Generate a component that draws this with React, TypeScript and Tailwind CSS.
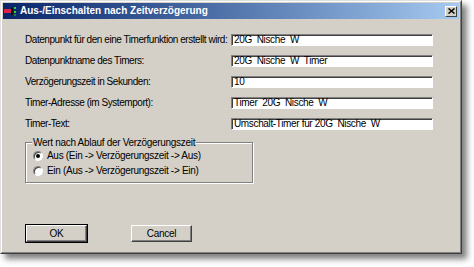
import React from "react";

const fields = [
  { label: "Datenpunkt für den eine Timerfunktion erstellt wird:", value: "20G  Nische  W" },
  { label: "Datenpunktname des Timers:", value: "20G  Nische  W  Timer" },
  { label: "Verzögerungszeit in Sekunden:", value: "10" },
  { label: "Timer-Adresse (im Systemport):", value: "Timer  20G  Nische  W" },
  { label: "Timer-Text:", value: "Umschalt-Timer für 20G  Nische  W" },
];

const font = { fontFamily: '"Liberation Sans", Arial, sans-serif' };

function Radio({ checked, label }: { checked?: boolean; label: string }) {
  return (
    <div className="flex h-[15px] items-center">
      <span className="ml-[7px] flex h-[10px] w-[10px] items-center justify-center rounded-full border border-t-[#808080] border-l-[#808080] border-r-white border-b-white bg-white shadow-[inset_1px_1px_0_#404040]">
        {checked && <span className="h-[4px] w-[4px] rounded-full bg-black" />}
      </span>
      <span className="ml-[4px] whitespace-nowrap text-[10px] leading-none tracking-[-0.3px] text-black">{label}</span>
    </div>
  );
}

function Button({ label, isDefault }: { label: string; isDefault?: boolean }) {
  return (
    <div className={isDefault ? "border border-black" : "border border-transparent"}>
      <div className="flex h-[17px] w-[61px] items-center justify-center border border-t-white border-l-white border-r-[#404040] border-b-[#404040] bg-[#d4d0c8] shadow-[inset_-1px_-1px_0_#808080]">
        <span className="text-[10px] leading-none tracking-[-0.3px] text-black">{label}</span>
      </div>
    </div>
  );
}

export default function App() {
  return (
    <div className="h-[267px] w-[474px] overflow-hidden bg-white" style={font}>
      <div className="h-[254px] w-[462px] border border-t-[#dfdfdf] border-l-[#dfdfdf] border-r-[#404040] border-b-[#404040] bg-[#d4d0c8] shadow-[5px_5px_6px_rgba(0,0,0,0.5)]">
        <div className="flex h-full flex-col border border-t-white border-l-white border-r-[#808080] border-b-[#808080] p-px">
          <div className="flex h-[16px] items-center bg-gradient-to-r from-[#0a246a] to-[#a6caf0]">
            <svg width="14" height="11" viewBox="0 0 14 11" className="ml-[1px]">
              <rect x="0" y="3" width="7" height="4" fill="#e0204a" />
              <rect x="7" y="2" width="2" height="7" fill="#101010" />
              <rect x="10" y="1" width="2" height="2" fill="#30d040" />
              <rect x="10" y="5" width="2" height="2" fill="#30d040" />
              <rect x="10" y="8" width="2" height="2" fill="#208030" />
            </svg>
            <span className="ml-[2px] whitespace-nowrap text-[10px] font-bold leading-none text-white">
              Aus-/Einschalten nach Zeitverzögerung
            </span>
            <div className="ml-auto mr-[2px] flex h-[11px] w-[12px] items-center justify-center border border-t-white border-l-white border-r-[#404040] border-b-[#404040] bg-[#d4d0c8]">
              <svg width="7" height="6" viewBox="0 0 7 6">
                <path d="M0.5 0.5 L6.5 5.5 M6.5 0.5 L0.5 5.5" stroke="black" strokeWidth="1.5" />
              </svg>
            </div>
          </div>

          <div className="flex flex-col pl-[22px] pt-[15px]">
            <div className="flex flex-col gap-[9px]">
              {fields.map((f) => (
                <div key={f.label} className="flex h-[12px] items-center">
                  <span className="w-[206px] whitespace-nowrap text-[10px] leading-none tracking-[-0.45px] text-black">{f.label}</span>
                  <div className="flex h-[12px] w-[202px] items-center border border-t-[#808080] border-l-[#808080] border-r-white border-b-white bg-white shadow-[inset_1px_1px_0_#404040]">
                    <span className="ml-[2px] whitespace-pre text-[10px] leading-none tracking-[-0.35px] text-black">{f.value}</span>
                  </div>
                </div>
              ))}
            </div>

            <fieldset className="mt-[7px] w-[228px] border border-[#808080] pb-[4px] shadow-[inset_1px_1px_0_white,1px_1px_0_white]">
              <legend className="relative ml-[6px] whitespace-nowrap bg-[#d4d0c8] px-[1px] text-[10px] leading-[11px] tracking-[-0.3px] text-black">
                Wert nach Ablauf der Verzögerungszeit
              </legend>
              <Radio checked label="Aus (Ein -> Verzögerungszeit -> Aus)" />
              <Radio label="Ein (Aus -> Verzögerungszeit -> Ein)" />
            </fieldset>

            <div className="mt-[41px] flex gap-[42px]">
              <Button label="OK" isDefault />
              <Button label="Cancel" />
            </div>
          </div>
        </div>
      </div>
    </div>
  );
}
